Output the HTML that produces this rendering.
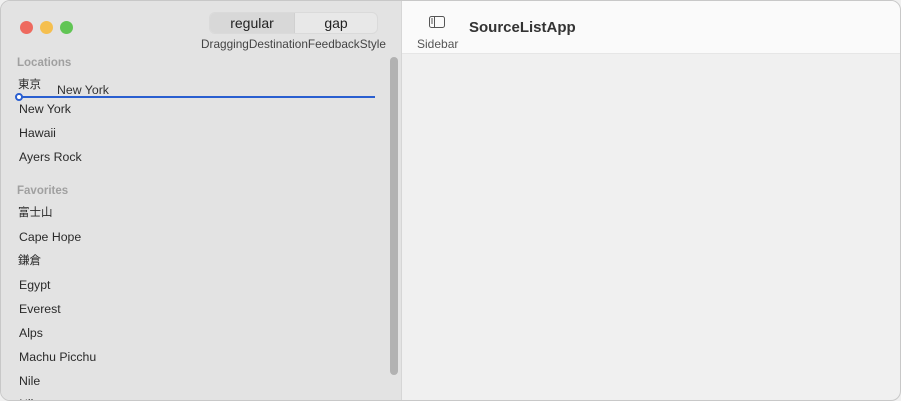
<!DOCTYPE html>
<html><head><meta charset="utf-8"><style>
*{margin:0;padding:0;box-sizing:border-box}
body{width:901px;height:401px;overflow:hidden;background:#f0f0f0;font-family:"Liberation Sans","Noto Sans CJK JP",sans-serif;position:relative}
.win{position:absolute;left:0;top:0;width:901px;height:401px;border:1px solid #c8c8c8;border-radius:10px;overflow:hidden;background:#f0f0f0}
.side{position:absolute;left:0;top:0;width:401px;height:401px;background:#e3e3e3;border-right:1px solid #d6d6d6}
.tb{position:absolute;left:401px;top:0;right:0;height:53px;background:#fafafa;border-bottom:1px solid #e6e6e6}
.dot{position:absolute;top:20px;width:13px;height:13px;border-radius:50%}
.t{position:absolute;font-size:12.3px;line-height:14px;color:#2a2a2a;white-space:nowrap}
.h{position:absolute;font-size:11.5px;line-height:14px;color:#a0a0a0;font-weight:bold}
.seg{position:absolute;left:208px;top:11px;width:169px;height:22px;border-radius:6px;background:#e8e8e8;border:1px solid #dadada}
.seg div{position:absolute;top:0;height:20px;line-height:20px;text-align:center;font-size:14px;color:#222}
</style></head><body><div class="win">
<div class="side">
<div class="dot" style="left:19px;background:#ee6a5f"></div>
<div class="dot" style="left:39px;background:#f5bf4f"></div>
<div class="dot" style="left:59px;background:#61c554"></div>
<div class="seg"><div style="left:0;width:84px;background:#d8d8d8;border-radius:5px 0 0 5px">regular</div><div style="left:84px;width:83px;border-left:1px solid #d0d0d0">gap</div></div>
<div class="t" style="left:200px;top:36px;color:#444;font-size:11.8px">DraggingDestinationFeedbackStyle</div>
<div class="h" style="left:16px;top:55px">Locations</div>
<div class="t" style="left:17px;top:77px;font-size:11.5px">東京</div>
<div class="t" style="left:56px;top:82px;color:#333">New York</div>
<div style="position:absolute;left:17px;top:95px;width:357px;height:2px;background:#2a5fd0"></div>
<div style="position:absolute;left:14px;top:92px;width:8px;height:8px;border:2px solid #2a5fd0;border-radius:50%;background:#fff"></div>
<div class="t" style="left:18px;top:101px">New York</div>
<div class="t" style="left:18px;top:125px">Hawaii</div>
<div class="t" style="left:18px;top:149px">Ayers Rock</div>
<div class="h" style="left:16px;top:183px">Favorites</div>
<div class="t" style="left:17px;top:205px;font-size:11.5px">富士山</div>
<div class="t" style="left:18px;top:229px">Cape Hope</div>
<div class="t" style="left:17px;top:253px;font-size:11.5px">鎌倉</div>
<div class="t" style="left:18px;top:277px">Egypt</div>
<div class="t" style="left:18px;top:301px">Everest</div>
<div class="t" style="left:18px;top:325px">Alps</div>
<div class="t" style="left:18px;top:349px">Machu Picchu</div>
<div class="t" style="left:18px;top:373px">Nile</div>
<div class="t" style="left:18px;top:396px">Nile</div>
<div style="position:absolute;left:389px;top:56px;width:8px;height:318px;border-radius:4px;background:#b2b2b2"></div>
</div>
<div class="tb">
<svg style="position:absolute;left:27px;top:15px" width="16" height="12" viewBox="0 0 16 12"><rect x="0.5" y="0.5" width="15" height="11" rx="2" fill="none" stroke="#555"/><line x1="5.5" y1="0.5" x2="5.5" y2="11.5" stroke="#555"/><line x1="2" y1="3" x2="4" y2="3" stroke="#555"/><line x1="2" y1="5" x2="4" y2="5" stroke="#555"/><line x1="2" y1="7" x2="4" y2="7" stroke="#555"/></svg>
<div class="t" style="left:15px;top:36px;color:#555;font-size:12px">Sidebar</div>
<div class="t" style="left:67px;top:18px;font-size:15px;line-height:18px;font-weight:bold;color:#333">SourceListApp</div>
</div>
</div></body></html>
